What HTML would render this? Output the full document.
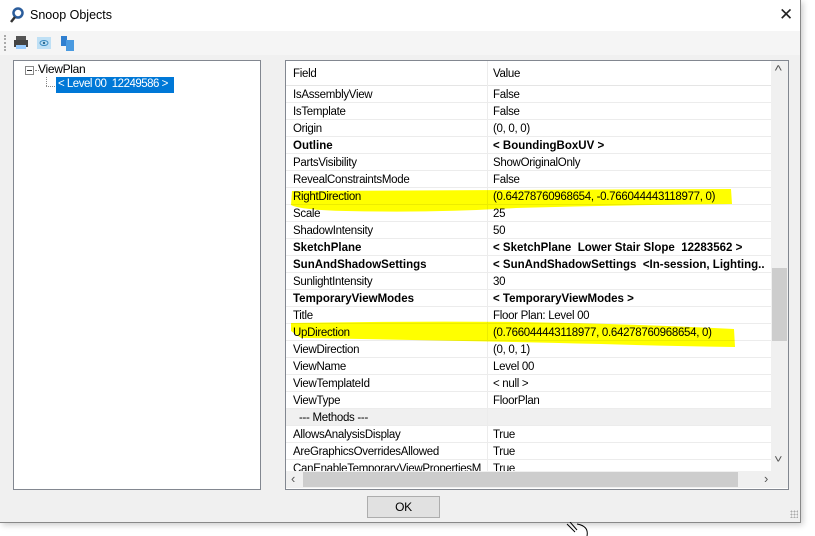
<!DOCTYPE html>
<html><head><style>
*{margin:0;padding:0;box-sizing:border-box}
body{width:815px;height:536px;background:#fff;position:relative;overflow:hidden;font-family:"Liberation Sans",sans-serif;font-size:11.5px;color:#000;letter-spacing:-0.3px}
.a{position:absolute}
.row{position:absolute;left:0;width:485px;height:17px;border-bottom:1px solid #ececec;white-space:nowrap}
.row span{position:absolute;top:3px}
.f{left:7px}.v{left:207px}
.b{font-weight:bold;letter-spacing:0}
</style></head><body>
<div class="a" style="left:0;top:0;width:801px;height:523px;background:#f0f0f0;border-right:1px solid #888;border-bottom:1px solid #888;box-shadow:2px 2px 6px rgba(0,0,0,.2)"></div>
<div class="a" style="left:0;top:0;width:800px;height:31px;background:#fff"></div>
<svg class="a" style="left:9px;top:7px" width="16" height="17" viewBox="0 0 16 17"><circle cx="9" cy="6" r="4.5" fill="none" stroke="#2b5d9c" stroke-width="2.5"/><path d="M6 10 L2 15" stroke="#333" stroke-width="2.5"/></svg>
<div class="a" style="left:30px;top:8px;font-size:12.5px;letter-spacing:0">Snoop Objects</div>
<div class="a" style="left:779px;top:5px;font-size:17px;color:#222">✕</div>
<div class="a" style="left:0;top:31px;width:800px;height:24px;background:#f5f5f5"></div>
<div class="a" style="left:4px;top:35px;width:2px;height:16px;border-left:2px dotted #aaa"></div>
<svg class="a" style="left:13px;top:36px" width="16" height="14"><rect x="3" y="0" width="10" height="4" fill="#555"/><rect x="1" y="4" width="14" height="7" fill="#444"/><rect x="3" y="9" width="10" height="4" fill="#9cf"/></svg>
<svg class="a" style="left:37px;top:37px" width="14" height="12"><rect width="14" height="12" fill="#bfe0f5"/><ellipse cx="7" cy="6" rx="4" ry="2.5" fill="none" stroke="#3a8ac0"/><circle cx="7" cy="6" r="1.2" fill="#2a6a90"/></svg>
<svg class="a" style="left:61px;top:36px" width="13" height="15"><rect x="0" y="0" width="6" height="10" fill="#2f7fd0"/><rect x="5" y="4" width="8" height="11" fill="#4a9ae0"/></svg>
<!-- tree -->
<div class="a" style="left:13px;top:60px;width:248px;height:430px;background:#fff;border:1px solid #828790"></div>
<div class="a" style="left:25px;top:66px;width:9px;height:9px;border:1px solid #888;background:#fff"></div>
<div class="a" style="left:27px;top:70px;width:5px;height:1px;background:#333"></div>
<div class="a" style="left:35px;top:70px;width:4px;border-top:1px dotted #888"></div>
<div class="a" style="left:38px;top:62px;font-size:12px">ViewPlan</div>
<div class="a" style="left:46px;top:77px;height:9px;border-left:1px dotted #888"></div>
<div class="a" style="left:46px;top:86px;width:9px;border-top:1px dotted #888"></div>
<div class="a" style="left:56px;top:77px;width:118px;height:16px;background:#0078d7;color:#fff;font-size:11.5px;padding:1px 0 0 2px;white-space:nowrap;letter-spacing:-0.5px">&lt; Level 00&nbsp; 12249586 &gt;</div>
<!-- grid -->
<div class="a" style="left:285px;top:60px;width:504px;height:430px;background:#fff;border:1px solid #828790;overflow:hidden">
<div class="a" style="left:0;top:0;width:485px;height:25px;border-bottom:1px solid #e5e5e5"><span class="a" style="left:7px;top:7px">Field</span><span class="a" style="left:207px;top:7px">Value</span></div>
<div class="a" style="left:201px;top:0;width:1px;height:410px;background:#ececec"></div>
<div class="a" style="left:0;top:25px;width:485px;height:385px">
<div class="row" style="top:0"><span class="f">IsAssemblyView</span><span class="v">False</span></div>
<div class="row" style="top:17px"><span class="f">IsTemplate</span><span class="v">False</span></div>
<div class="row" style="top:34px"><span class="f">Origin</span><span class="v">(0, 0, 0)</span></div>
<div class="row b" style="top:51px"><span class="f">Outline</span><span class="v">&lt; BoundingBoxUV &gt;</span></div>
<div class="row" style="top:68px"><span class="f">PartsVisibility</span><span class="v">ShowOriginalOnly</span></div>
<div class="row" style="top:85px"><span class="f">RevealConstraintsMode</span><span class="v">False</span></div>
<div class="row" style="top:102px"><span class="f">RightDirection</span><span class="v">(0.64278760968654, -0.766044443118977, 0)</span></div>
<div class="row" style="top:119px"><span class="f">Scale</span><span class="v">25</span></div>
<div class="row" style="top:136px"><span class="f">ShadowIntensity</span><span class="v">50</span></div>
<div class="row b" style="top:153px"><span class="f">SketchPlane</span><span class="v">&lt; SketchPlane&nbsp; Lower Stair Slope&nbsp; 12283562 &gt;</span></div>
<div class="row b" style="top:170px"><span class="f">SunAndShadowSettings</span><span class="v">&lt; SunAndShadowSettings&nbsp; &lt;In-session, Lighting..</span></div>
<div class="row" style="top:187px"><span class="f">SunlightIntensity</span><span class="v">30</span></div>
<div class="row b" style="top:204px"><span class="f">TemporaryViewModes</span><span class="v">&lt; TemporaryViewModes &gt;</span></div>
<div class="row" style="top:221px"><span class="f">Title</span><span class="v">Floor Plan: Level 00</span></div>
<div class="row" style="top:238px"><span class="f">UpDirection</span><span class="v">(0.766044443118977, 0.64278760968654, 0)</span></div>
<div class="row" style="top:255px"><span class="f">ViewDirection</span><span class="v">(0, 0, 1)</span></div>
<div class="row" style="top:272px"><span class="f">ViewName</span><span class="v">Level 00</span></div>
<div class="row" style="top:289px"><span class="f">ViewTemplateId</span><span class="v">&lt; null &gt;</span></div>
<div class="row" style="top:306px"><span class="f">ViewType</span><span class="v">FloorPlan</span></div>
<div class="row" style="top:323px;background:#f0f0f0"><span class="f" style="left:13px">--- Methods ---</span></div>
<div class="row" style="top:340px;background:#fff"><span class="f">AllowsAnalysisDisplay</span><span class="v">True</span></div>
<div class="row" style="top:357px;background:#fff"><span class="f">AreGraphicsOverridesAllowed</span><span class="v">True</span></div>
<div class="row" style="top:374px;background:#fff"><span class="f">CanEnableTemporaryViewPropertiesM</span><span class="v">True</span></div>
</div>
<div class="a" style="left:201px;top:340px;width:1px;height:70px;background:#ececec"></div>
<svg class="a" style="left:0;top:0;mix-blend-mode:multiply" width="504" height="430">
<path d="M6,130 L445,128 L446,143 Q330,144 230,147 Q150,152 60,150 Q15,149 5,144 Z" fill="#ffff00"/>
<path d="M5,262 Q120,260 235,261 Q350,263 448,268 L449,286 Q380,285 315,283 Q150,279 15,277 L5,270 Z" fill="#ffff00"/>
</svg>
<!-- vscroll -->
<div class="a" style="left:485px;top:0;width:17px;height:410px;background:#f0f0f0"></div>
<div class="a" style="left:489px;top:2px;font-size:11px;color:#555;transform:scaleX(1.3)">˄</div>
<div class="a" style="left:486px;top:207px;width:15px;height:73px;background:#cdcdcd"></div>
<div class="a" style="left:489px;top:393px;font-size:11px;color:#555;transform:scaleX(1.3)">˅</div>
<!-- hscroll -->
<div class="a" style="left:0;top:410px;width:502px;height:17px;background:#f0f0f0"></div>
<div class="a" style="left:17px;top:411px;width:435px;height:15px;background:#cdcdcd"></div>
<div class="a" style="left:5px;top:410px;font-size:13px;color:#555">‹</div>
<div class="a" style="left:478px;top:410px;font-size:13px;color:#555">›</div>
</div>
<div class="a" style="left:367px;top:496px;width:73px;height:22px;background:#e1e1e1;border:1px solid #adadad;text-align:center;line-height:20px;font-size:12px">OK</div>
<div class="a" style="left:790px;top:510px;width:8px;height:8px;background:radial-gradient(circle,#aaa 0.8px,transparent 1px) 0 0/3px 3px"></div>
<svg class="a" style="left:565px;top:522px" width="30" height="14"><path d="M2 2 L10 10 M5 0 L12 8 M12 2 Q24 4 22 14" stroke="#000" fill="none"/></svg>
</body></html>
